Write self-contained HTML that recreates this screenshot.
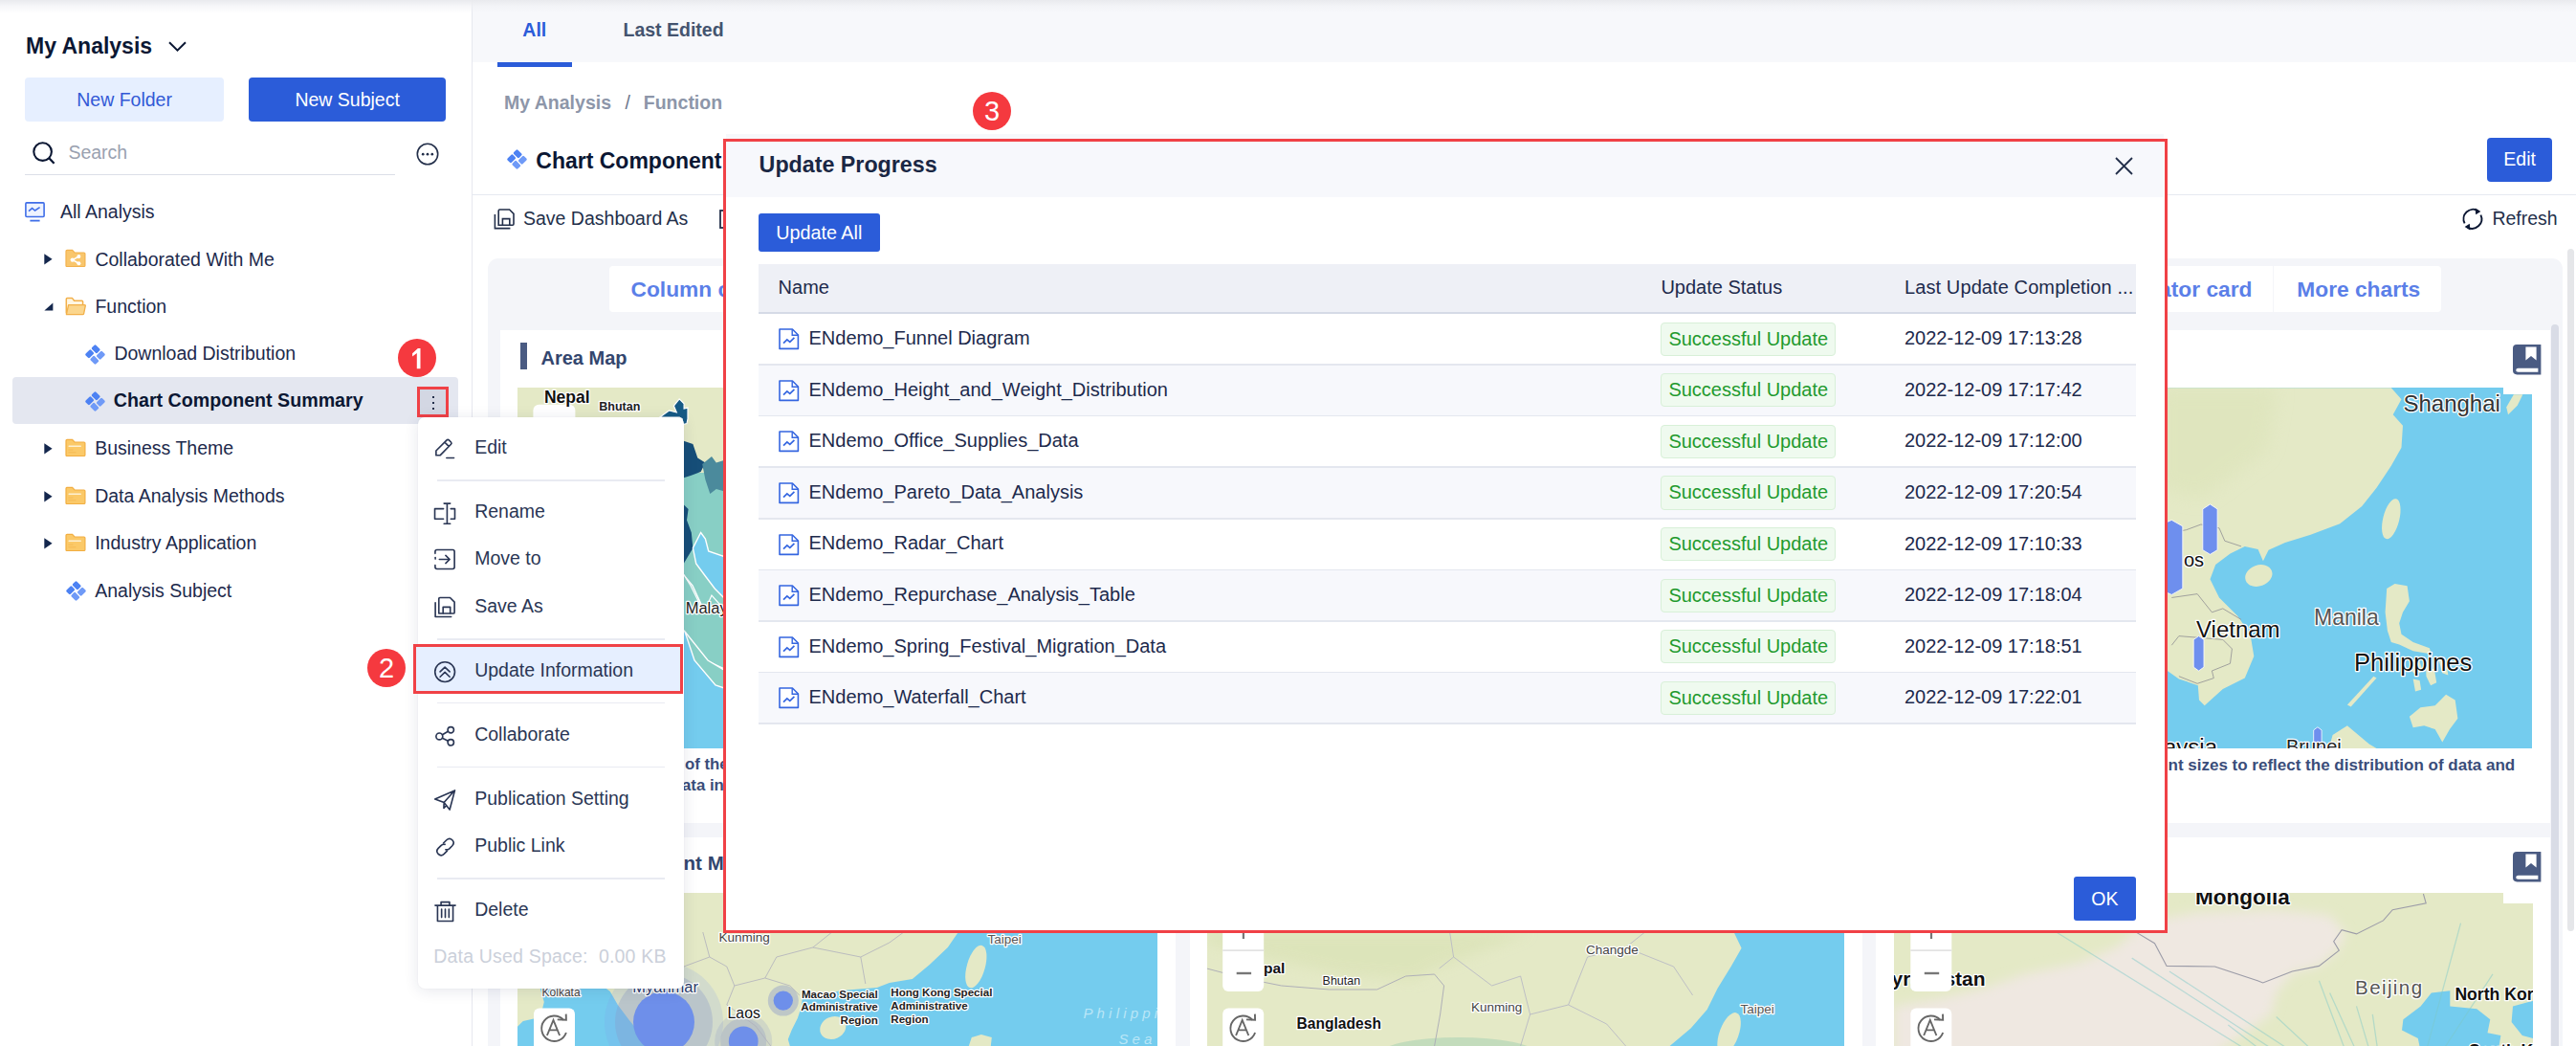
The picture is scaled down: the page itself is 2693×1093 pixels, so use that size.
<!DOCTYPE html>
<html><head><meta charset="utf-8"><title>Update Progress</title>
<style>
html,body{margin:0;padding:0;}
body{width:2693px;height:1093px;overflow:hidden;position:relative;background:#fff;font-family:"Liberation Sans",sans-serif;}
.b{position:absolute;display:block;}
.t{position:absolute;white-space:nowrap;}
svg{overflow:visible}
</style></head><body>

<div class="b" style="left:494.0px;top:0.0px;width:2199.0px;height:64.5px;background:#f7f8fb;"></div>
<div class="b" style="left:492.5px;top:0.0px;width:1.5px;height:1093.0px;background:#e6e8ef;"></div>
<div class="b" style="left:0.0px;top:0.0px;width:2693.0px;height:14.0px;background:linear-gradient(to bottom,#e9eaee 0%,rgba(240,241,245,0.6) 45%,rgba(255,255,255,0) 100%);"></div>
<div class="t" style="left:27.0px;top:36.80px;font-size:23px;line-height:23px;color:#0b1733;font-weight:700;">My Analysis</div>
<svg class="b" style="left:176.0px;top:43.0px;" width="19" height="11" viewBox="0 0 19 11"><path d="M1 1.2 L9.5 9.6 L18 1.2" fill="none" stroke="#0b1733" stroke-width="2"/></svg>
<div class="b" style="left:26.4px;top:81.0px;width:207.4px;height:46.0px;background:#e6efff;border-radius:4px;"></div>
<div class="t" style="left:26.4px;top:81px;width:207.4px;height:46px;line-height:46px;text-align:center;font-size:19.5px;color:#3259d6;">New Folder</div>
<div class="b" style="left:260.0px;top:81.0px;width:206.3px;height:46.0px;background:#2b5cd9;border-radius:4px;"></div>
<div class="t" style="left:260px;top:81px;width:206.3px;height:46px;line-height:46px;text-align:center;font-size:19.5px;color:#fff;">New Subject</div>
<svg class="b" style="left:34.0px;top:148.0px;" width="24" height="24" viewBox="0 0 24 24"><circle cx="10.6" cy="10.6" r="9.3" fill="none" stroke="#0b1733" stroke-width="2.1"/><path d="M17.3 17.3 L22.6 22.8" stroke="#0b1733" stroke-width="2.3" fill="none"/></svg>
<div class="t" style="left:71.4px;top:149.55px;font-size:19.5px;line-height:19.5px;color:#9aa1b0;">Search</div>
<svg class="b" style="left:434.5px;top:148.5px;" width="24" height="24" viewBox="0 0 24 24"><circle cx="12" cy="12" r="10.7" fill="none" stroke="#232f4a" stroke-width="1.6"/><circle cx="7.2" cy="12.2" r="1.35" fill="#232f4a"/><circle cx="12" cy="12.2" r="1.35" fill="#232f4a"/><circle cx="16.8" cy="12.2" r="1.35" fill="#232f4a"/></svg>
<div class="b" style="left:26.4px;top:181.7px;width:387.0px;height:1.6px;background:#dcdfe8;"></div>
<svg class="b" style="left:26.0px;top:211.0px;" width="21" height="21" viewBox="0 0 21 21"><rect x="0.9" y="0.9" width="19.2" height="14.6" rx="1" fill="#eef3ff" stroke="#3f6ee8" stroke-width="1.6"/><path d="M4 9.6 L7.6 6.6 L10.6 9 L15.6 5.6" fill="none" stroke="#3f6ee8" stroke-width="1.6"/><path d="M5.4 19.6 L15.6 19.6" stroke="#3f6ee8" stroke-width="1.8"/></svg>
<div class="t" style="left:63.0px;top:211.55px;font-size:19.5px;line-height:19.5px;color:#1d2a4c;">All Analysis</div>
<svg class="b" style="left:46.2px;top:265.0px;" width="9" height="12" viewBox="0 0 9 12"><path d="M0.3 0.3 L8.6 5.8 L0.3 11.4 Z" fill="#14274d"/></svg>
<svg class="b" style="left:68.4px;top:260.4px;" width="22" height="20" viewBox="0 0 22 20"><path d="M1 2.4 Q1 1.3 2.1 1.3 L7.6 1.3 L10 4 L19.8 4 Q20.9 4 20.9 5.1 L20.9 17.4 Q20.9 18.5 19.8 18.5 L2.1 18.5 Q1 18.5 1 17.4 Z" fill="#f9c66c" stroke="#f3b24d" stroke-width="1.2"/><path d="M8 11.6 L14 8.2 M8 11.6 L14 15" stroke="#fff" stroke-width="1.5" fill="none"/><circle cx="7.8" cy="11.6" r="2.2" fill="#fff"/><circle cx="14.4" cy="8" r="2" fill="#fff"/><circle cx="14.4" cy="15.2" r="2" fill="#fff"/></svg>
<div class="t" style="left:99.4px;top:261.55px;font-size:19.5px;line-height:19.5px;color:#1d2a4c;">Collaborated With Me</div>
<svg class="b" style="left:46.0px;top:315.6px;" width="10" height="9" viewBox="0 0 10 9"><path d="M9.4 0.4 L9.4 8.6 L0.4 8.6 Z" fill="#14274d"/></svg>
<svg class="b" style="left:68.4px;top:310.0px;" width="22" height="20" viewBox="0 0 22 20"><path d="M1.3 17.5 L1.3 2.4 Q1.3 1.4 2.3 1.4 L7.4 1.4 L9.6 4.2 L17.6 4.2 Q18.6 4.2 18.6 5.2 L18.6 8.4" fill="#fff6e2" stroke="#f2b04a" stroke-width="1.5" stroke-linejoin="round"/><path d="M3.6 8.6 L20.6 8.6 Q21.5 8.6 21.3 9.5 L19.6 17.8 Q19.4 18.7 18.5 18.7 L1.4 18.7 Z" fill="#fbd68d" stroke="#f2b04a" stroke-width="1.3" stroke-linejoin="round"/></svg>
<div class="t" style="left:99.4px;top:310.55px;font-size:19.5px;line-height:19.5px;color:#1d2a4c;">Function</div>
<svg class="b" style="left:88.6px;top:359.5px;" width="21" height="21" viewBox="0 0 21 21"><g transform="rotate(45 10.5 10.5) translate(2.88 2.88)"><rect x="0" y="0" width="8.0" height="6.0" rx="1.3" fill="#4d82f3"/><rect x="9.25" y="0" width="6.0" height="8.0" rx="1.3" fill="#6f9af7"/><rect x="7.25" y="9.25" width="8.0" height="6.0" rx="1.3" fill="#6f9af7"/><rect x="0" y="7.25" width="6.0" height="8.0" rx="1.3" fill="#4d82f3"/></g></svg>
<div class="t" style="left:119.4px;top:359.55px;font-size:19.5px;line-height:19.5px;color:#1d2a4c;">Download Distribution</div>
<div class="b" style="left:13.0px;top:394.0px;width:466.4px;height:48.6px;background:#e4e7f0;border-radius:4px;"></div>
<svg class="b" style="left:88.6px;top:409.0px;" width="21" height="21" viewBox="0 0 21 21"><g transform="rotate(45 10.5 10.5) translate(2.88 2.88)"><rect x="0" y="0" width="8.0" height="6.0" rx="1.3" fill="#4d82f3"/><rect x="9.25" y="0" width="6.0" height="8.0" rx="1.3" fill="#6f9af7"/><rect x="7.25" y="9.25" width="8.0" height="6.0" rx="1.3" fill="#6f9af7"/><rect x="0" y="7.25" width="6.0" height="8.0" rx="1.3" fill="#4d82f3"/></g></svg>
<div class="t" style="left:118.8px;top:409.48px;font-size:19.65px;line-height:19.65px;color:#0b1733;font-weight:700;">Chart Component Summary</div>
<div class="b" style="left:436.0px;top:404.4px;width:33.0px;height:32.0px;background:#d3d7e3;border:3px solid #f04146;box-sizing:border-box;"></div>
<div class="b" style="left:451.7px;top:413.6px;width:2.4px;height:2.4px;background:#232f4a;"></div>
<div class="b" style="left:451.7px;top:419.6px;width:2.4px;height:2.4px;background:#232f4a;"></div>
<div class="b" style="left:451.7px;top:425.6px;width:2.4px;height:2.4px;background:#232f4a;"></div>
<svg class="b" style="left:46.2px;top:463.3px;" width="9" height="12" viewBox="0 0 9 12"><path d="M0.3 0.3 L8.6 5.8 L0.3 11.4 Z" fill="#14274d"/></svg>
<svg class="b" style="left:68.4px;top:458.3px;" width="22" height="20" viewBox="0 0 22 20"><path d="M1 2.4 Q1 1.3 2.1 1.3 L7.6 1.3 L10 4 L19.8 4 Q20.9 4 20.9 5.1 L20.9 17.4 Q20.9 18.5 19.8 18.5 L2.1 18.5 Q1 18.5 1 17.4 Z" fill="#fbc968" stroke="#f2ae42" stroke-width="1.2"/><rect x="3.4" y="7.4" width="13.6" height="1.6" rx="0.8" fill="#fdf0d2"/><rect x="3.4" y="11.6" width="5" height="1" fill="#f5bb55"/><rect x="3.4" y="14.2" width="8" height="1" fill="#f5bb55"/></svg>
<div class="t" style="left:99.2px;top:458.55px;font-size:19.5px;line-height:19.5px;color:#1d2a4c;">Business Theme</div>
<svg class="b" style="left:46.2px;top:512.8px;" width="9" height="12" viewBox="0 0 9 12"><path d="M0.3 0.3 L8.6 5.8 L0.3 11.4 Z" fill="#14274d"/></svg>
<svg class="b" style="left:68.4px;top:507.8px;" width="22" height="20" viewBox="0 0 22 20"><path d="M1 2.4 Q1 1.3 2.1 1.3 L7.6 1.3 L10 4 L19.8 4 Q20.9 4 20.9 5.1 L20.9 17.4 Q20.9 18.5 19.8 18.5 L2.1 18.5 Q1 18.5 1 17.4 Z" fill="#fbc968" stroke="#f2ae42" stroke-width="1.2"/><rect x="3.4" y="7.4" width="13.6" height="1.6" rx="0.8" fill="#fdf0d2"/><rect x="3.4" y="11.6" width="5" height="1" fill="#f5bb55"/><rect x="3.4" y="14.2" width="8" height="1" fill="#f5bb55"/></svg>
<div class="t" style="left:99.2px;top:508.55px;font-size:19.5px;line-height:19.5px;color:#1d2a4c;">Data Analysis Methods</div>
<svg class="b" style="left:46.2px;top:562.3px;" width="9" height="12" viewBox="0 0 9 12"><path d="M0.3 0.3 L8.6 5.8 L0.3 11.4 Z" fill="#14274d"/></svg>
<svg class="b" style="left:68.4px;top:557.3px;" width="22" height="20" viewBox="0 0 22 20"><path d="M1 2.4 Q1 1.3 2.1 1.3 L7.6 1.3 L10 4 L19.8 4 Q20.9 4 20.9 5.1 L20.9 17.4 Q20.9 18.5 19.8 18.5 L2.1 18.5 Q1 18.5 1 17.4 Z" fill="#fbc968" stroke="#f2ae42" stroke-width="1.2"/><rect x="3.4" y="7.4" width="13.6" height="1.6" rx="0.8" fill="#fdf0d2"/><rect x="3.4" y="11.6" width="5" height="1" fill="#f5bb55"/><rect x="3.4" y="14.2" width="8" height="1" fill="#f5bb55"/></svg>
<div class="t" style="left:99.2px;top:557.55px;font-size:19.5px;line-height:19.5px;color:#1d2a4c;">Industry Application</div>
<svg class="b" style="left:68.6px;top:606.8px;" width="21" height="21" viewBox="0 0 21 21"><g transform="rotate(45 10.5 10.5) translate(2.88 2.88)"><rect x="0" y="0" width="8.0" height="6.0" rx="1.3" fill="#4d82f3"/><rect x="9.25" y="0" width="6.0" height="8.0" rx="1.3" fill="#6f9af7"/><rect x="7.25" y="9.25" width="8.0" height="6.0" rx="1.3" fill="#6f9af7"/><rect x="0" y="7.25" width="6.0" height="8.0" rx="1.3" fill="#4d82f3"/></g></svg>
<div class="t" style="left:99.2px;top:607.55px;font-size:19.5px;line-height:19.5px;color:#1d2a4c;">Analysis Subject</div>
<div class="t" style="left:546.3px;top:21.55px;font-size:19.5px;line-height:19.5px;color:#2b5cd9;font-weight:700;">All</div>
<div class="b" style="left:520.0px;top:64.5px;width:78.0px;height:5.4px;background:#2b5cd9;"></div>
<div class="t" style="left:651.5px;top:21.55px;font-size:19.5px;line-height:19.5px;color:#44546f;font-weight:700;">Last Edited</div>
<div class="t" style="left:527.0px;top:97.55px;font-size:19.5px;line-height:19.5px;color:#8d96a9;font-weight:700;">My Analysis</div>
<div class="t" style="left:653.5px;top:97.55px;font-size:19.5px;line-height:19.5px;color:#6a748a;">/</div>
<div class="t" style="left:672.8px;top:97.55px;font-size:19.5px;line-height:19.5px;color:#8d96a9;font-weight:700;">Function</div>
<svg class="b" style="left:529.5px;top:156.0px;" width="21" height="21" viewBox="0 0 21 21"><g transform="rotate(45 10.5 10.5) translate(2.88 2.88)"><rect x="0" y="0" width="8.0" height="6.0" rx="1.3" fill="#4d82f3"/><rect x="9.25" y="0" width="6.0" height="8.0" rx="1.3" fill="#6f9af7"/><rect x="7.25" y="9.25" width="8.0" height="6.0" rx="1.3" fill="#6f9af7"/><rect x="0" y="7.25" width="6.0" height="8.0" rx="1.3" fill="#4d82f3"/></g></svg>
<div class="t" style="left:560.3px;top:156.80px;font-size:23px;line-height:23px;color:#0b1733;font-weight:700;">Chart Component Summary</div>
<div class="b" style="left:2599.7px;top:144.0px;width:68.8px;height:45.6px;background:#2b5cd9;border-radius:4px;"></div>
<div class="t" style="left:2599.7px;top:144px;width:68.8px;height:45.6px;line-height:45.6px;text-align:center;font-size:19.5px;color:#fff;">Edit</div>
<div class="b" style="left:494.0px;top:202.5px;width:2199.0px;height:1.5px;background:#e6e9f0;"></div>
<svg class="b" style="left:516.0px;top:218.0px;" width="22" height="22" viewBox="0 0 22 22"><path d="M5.2 4.4 L5.2 2.2 Q5.2 1 6.4 1 L16.6 1 L21 5.4 L21 16 Q21 17.2 19.8 17.2 L5.2 17.2 Z" fill="none" stroke="#232f4a" stroke-width="1.6"/><path d="M9.4 17 L9.4 10.6 L16.8 10.6 L16.8 17" fill="none" stroke="#232f4a" stroke-width="1.6"/><path d="M1.4 6 L1.4 20.6 L17.4 20.6" fill="none" stroke="#232f4a" stroke-width="1.6"/></svg>
<div class="t" style="left:547.0px;top:218.55px;font-size:19.5px;line-height:19.5px;color:#232f4a;">Save Dashboard As</div>
<svg class="b" style="left:751.5px;top:219.0px;" width="8" height="20" viewBox="0 0 8 20"><rect x="1" y="1" width="12" height="18" fill="none" stroke="#232f4a" stroke-width="1.8"/></svg>
<svg class="b" style="left:2572.5px;top:216.5px;" width="24" height="24" viewBox="0 0 24 24"><path d="M3.6 16.4 A10 10 0 0 1 17.6 3.2" fill="none" stroke="#0b1733" stroke-width="1.9"/><path d="M20.4 7.6 A10 10 0 0 1 6.6 20.6" fill="none" stroke="#0b1733" stroke-width="1.9"/><path d="M14.6 0.6 L20.4 4 L15.2 7.2 Z" fill="#0b1733"/><path d="M9.4 23.4 L3.6 20 L8.8 16.8 Z" fill="#0b1733"/></svg>
<div class="t" style="left:2605.4px;top:218.55px;font-size:19.5px;line-height:19.5px;color:#232f4a;">Refresh</div>
<div class="b" style="left:510.0px;top:270.0px;width:2168.8px;height:830.0px;background:#f4f5f9;border-radius:11px 11px 0 0;"></div>
<div class="b" style="left:636.6px;top:278.0px;width:400.0px;height:48.0px;background:#fff;border-radius:4px;"></div>
<div class="t" style="left:659.5px;top:290.93px;font-size:22.75px;line-height:22.75px;color:#5b7fe8;font-weight:700;">Column chart</div>
<div class="b" style="left:2100.0px;top:277.8px;width:276.0px;height:47.8px;background:#fff;"></div>
<div class="b" style="left:2377.0px;top:277.8px;width:175.3px;height:47.8px;background:#fff;border-radius:0 4px 4px 0;"></div>
<div class="t" style="left:2204.0px;top:290.93px;font-size:22.75px;line-height:22.75px;color:#5b7fe8;font-weight:700;">Indicator card</div>
<div class="t" style="left:2401.3px;top:290.93px;font-size:22.75px;line-height:22.75px;color:#5b7fe8;font-weight:700;">More charts</div>
<div class="b" style="left:523.4px;top:345.0px;width:706.1px;height:515.4px;background:#fff;"></div>
<div class="b" style="left:523.4px;top:874.5px;width:706.1px;height:230.0px;background:#fff;"></div>
<div class="b" style="left:1243.5px;top:345.0px;width:703.4px;height:515.4px;background:#fff;"></div>
<div class="b" style="left:1243.5px;top:874.5px;width:703.4px;height:230.0px;background:#fff;"></div>
<div class="b" style="left:1960.9px;top:345.0px;width:705.1px;height:515.4px;background:#fff;"></div>
<div class="b" style="left:1960.9px;top:874.5px;width:705.1px;height:230.0px;background:#fff;"></div>
<div class="b" style="left:544.3px;top:358.2px;width:6.7px;height:28.2px;background:#4a5b82;"></div>
<div class="t" style="left:565.5px;top:364.30px;font-size:20px;line-height:20px;color:#33466e;font-weight:700;">Area Map</div>
<div class="t" style="left:565.5px;top:892.30px;font-size:20px;line-height:20px;color:#33466e;font-weight:700;">Point Map</div>
<div class="t" style="left:714.6px;top:891.55px;font-size:20.5px;line-height:20.5px;color:#33466e;font-weight:700;">nt Map</div>
<div class="t" style="left:716.0px;top:791.40px;font-size:16.8px;line-height:16.8px;color:#3a4d7a;font-weight:700;">of the</div>
<div class="t" style="left:713.0px;top:813.40px;font-size:16.8px;line-height:16.8px;color:#3a4d7a;font-weight:700;">ata in</div>
<div class="t" style="left:2266.5px;top:791.30px;font-size:17px;line-height:17px;color:#3a4d7a;font-weight:700;">nt sizes to reflect the distribution of data and</div>
<svg class="b" style="left:2626.8px;top:360.0px;" width="30" height="32" viewBox="0 0 30 32"><path d="M0 4 Q0 0 4 0 L29.4 0 L29.4 31.4 L4.4 31.4 Q0 31.4 0 27 Z" fill="#4a5b82"/><path d="M3.2 27 Q3.2 24.8 5.6 24.8 L26.4 24.8 L26.4 28.8 L5.6 28.8 Q3.2 28.8 3.2 27 Z" fill="#fff"/><path d="M13.4 2.6 L24.6 2.6 L24.6 16.4 L19 12 L13.4 16.4 Z" fill="#fff"/></svg>
<svg class="b" style="left:2626.8px;top:890.0px;" width="30" height="32" viewBox="0 0 30 32"><path d="M0 4 Q0 0 4 0 L29.4 0 L29.4 31.4 L4.4 31.4 Q0 31.4 0 27 Z" fill="#4a5b82"/><path d="M3.2 27 Q3.2 24.8 5.6 24.8 L26.4 24.8 L26.4 28.8 L5.6 28.8 Q3.2 28.8 3.2 27 Z" fill="#fff"/><path d="M13.4 2.6 L24.6 2.6 L24.6 16.4 L19 12 L13.4 16.4 Z" fill="#fff"/></svg>
<svg class="b" style="left:541.0px;top:405.0px;overflow:hidden;background:#74ccee" width="669.6" height="376.5" viewBox="541.0 405.0 669.6 376.5"><rect x="541" y="405" width="680" height="95" fill="#e4e9c6"/><path d="M689.8 436 L699.5 429 L707.3 430.9 L704.4 424.1 L710.2 416.8 L715.1 421.7 L715.1 427 L719 426.1 L719 437.7 L718 442.6 L714.1 443.5 L713.1 437.7 L710.2 436 Z" fill="#165a85" stroke="#fff" stroke-width="1.2"/><path d="M700 494 L760 494 L760 700 L738 690 L716 660 L700 640 Z" fill="#88cfc5"/><path d="M714 460.6 L724.4 463.9 L729.3 478.5 L737.4 483.4 L732.6 493.1 L722 497 L714 499.6 L700 500 L700 456 Z" fill="#164e78"/><path d="M734.2 485 L744 476.9 L748.8 483.4 L760 480 L760 514.2 L748.8 511 L742.3 515.9 L737.4 501.2 Z" fill="#4b8a9c"/><path d="M700 524 L714.7 527.2 L719.6 532.1 L718 543.5 L722.8 556.5 L724.4 572.7 L714.7 589 L700 590 Z" fill="#164e78"/><path d="M732.6 556.5 L737.4 563 L740.7 576 L760 582.5 L760 628 L747.2 615 L737.4 602 L727.7 589 L724.4 572.7 Z" fill="#74ccee" stroke="#fff" stroke-width="1.4"/><path d="M714 600 L724 612 L737 640 L760 662" fill="none" stroke="#fff" stroke-width="1.4"/><path d="M700 640 L716 660 L738 690 L760 700 L760 640 L744 622 L736 640 L722 612 L712 596 L700 600 Z" fill="#88cfc5" stroke="#fff" stroke-width="1.2"/><path d="M716 660 L726 690 L748 716 L760 720 L760 702 L740 690 Z" fill="#88cfc5" stroke="#fff" stroke-width="1.4"/><rect x="557.4" y="422.7" width="44" height="60" rx="6" fill="#fff"/><text x="569" y="421" font-family="Liberation Sans, sans-serif" font-size="17.5" fill="#111" style="font-weight:700;paint-order:stroke;stroke:#fff;stroke-width:2.6px;stroke-linejoin:round;">Nepal</text><text x="626.3" y="429.2" font-family="Liberation Sans, sans-serif" font-size="12.5" fill="#222" style="font-weight:700;paint-order:stroke;stroke:#fff;stroke-width:2.6px;stroke-linejoin:round;">Bhutan</text><text x="716.7" y="641" font-family="Liberation Sans, sans-serif" font-size="16.5" fill="#222" style="paint-order:stroke;stroke:#fff;stroke-width:2.6px;stroke-linejoin:round;">Malaysia</text></svg>
<svg class="b" style="left:2262.0px;top:405.0px;overflow:hidden;background:#74ccee" width="384.7" height="376.5" viewBox="2262.0 405.0 384.7 376.5"><defs><filter id="bl8" x="-30%" y="-30%" width="160%" height="160%"><feGaussianBlur stdDeviation="9"/></filter></defs><polygon points="2255.0,405.3 2499.8,405.3 2510.5,417.2 2501.7,433.2 2512.0,444.7 2510.5,467.7 2499.8,486.8 2484.5,509.7 2469.2,528.9 2446.2,547.2 2415.6,558.7 2388.9,567.1 2371.6,574.7 2365.9,586.2 2360.6,574.0 2346.8,570.9 2331.5,578.6 2316.2,590.0 2310.5,605.3 2320.0,624.5 2339.1,643.6 2352.5,662.7 2356.3,685.7 2346.8,708.6 2323.8,720.1 2304.7,737.3 2299.0,731.5 2297.8,716.2 2277.9,709.4 2255.0,693.3" fill="#e4e9c6"/><polygon points="2255.0,405.3 2381.2,405.3 2369.7,471.5 2300.9,521.2 2255.0,509.7" fill="#dbe3b8" opacity="0.55" filter="url(#bl8)"/><ellipse cx="2361.3" cy="601.5" rx="14.5" ry="11" fill="#e4e9c6" transform="rotate(-20 2361.3 601.5)"/><ellipse cx="2499.8" cy="542.2" rx="8.5" ry="21.5" fill="#e4e9c6" transform="rotate(14 2499.8 542.2)"/><polygon points="2495.2,614.9 2503.6,609.9 2516.6,612.2 2518.9,628.3 2512.0,639.8 2508.2,651.2 2510.5,662.7 2522.7,671.1 2539.9,677.2 2541.8,683.4 2522.7,680.3 2508.2,673.4 2499.8,671.1 2495.9,658.9 2493.6,639.8" fill="#e4e9c6"/><polygon points="2518.9,690.2 2528.8,688.7 2532.7,701.0 2525.8,705.5 2519.6,699.4" fill="#e4e9c6"/><polygon points="2518.9,748.8 2530.4,739.2 2545.7,737.3 2557.1,725.8 2566.7,731.5 2569.4,750.7 2561.0,762.1 2553.3,775.5 2545.7,762.1 2534.2,758.3 2522.7,760.2" fill="#e4e9c6"/><polygon points="2453.9,736.5 2481.4,706.7 2484.5,708.6 2457.7,738.4" fill="#e4e9c6"/><polygon points="2434.7,782.0 2438.6,767.9 2453.9,758.3 2476.8,777.4 2484.5,782.0" fill="#e4e9c6"/><polygon points="2536.1,697.1 2544.9,699.4 2547.2,713.2 2541.1,716.2 2536.5,706.7" fill="#e4e9c6"/><polygon points="2522.7,709.4 2529.6,710.9 2531.1,720.8 2525.0,722.4" fill="#e4e9c6"/><polygon points="2549.5,689.5 2557.1,691.8 2559.4,705.5 2553.3,703.2" fill="#e4e9c6"/><polygon points="2627.9,412.2 2637.4,412.2 2631.7,423.7 2622.1,433.2 2620.2,425.6" fill="#e4e9c6"/><polyline points="2255.0,559.4 2285.6,553.7 2300.9,548.0 2320.0,551.8 2325.8,565.2 2343.0,570.9" fill="none" stroke="#999" stroke-width="0.9"/><polyline points="2270.3,624.5 2297.1,620.6 2312.4,639.8 2323.8,635.9 2343.0,647.4" fill="none" stroke="#999" stroke-width="0.9"/><polyline points="2270.3,674.2 2277.9,664.6 2323.8,668.4 2333.4,678.0 2331.5,693.3 2312.4,701.0 2314.3,708.6 2297.1,714.3 2277.9,706.7" fill="none" stroke="#999" stroke-width="0.9"/><polygon points="2255.0,549.9 2270.3,543.4 2281.8,549.9 2281.8,614.9 2270.3,621.4 2255.0,614.9" fill="#6e8fee" stroke="#fff" stroke-width="0.8"/><polygon points="2302.8,531.9 2310.5,526.9 2318.1,531.9 2318.1,574.7 2310.5,579.3 2302.8,574.7" fill="#6e8fee" stroke="#fff" stroke-width="0.8"/><polygon points="2293.2,668.4 2298.6,664.6 2304.0,668.4 2304.0,697.1 2298.6,701.0 2293.2,697.1" fill="#6e8fee" stroke="#fff" stroke-width="0.8"/><polygon points="2418.7,762.9 2422.9,759.8 2427.1,762.9 2427.1,782.0 2418.7,782.0" fill="#6e8fee" stroke="#fff" stroke-width="0.8"/><text x="2512.5" y="429.5" font-family="Liberation Sans, sans-serif" font-size="24" fill="#333" style="paint-order:stroke;stroke:#fff;stroke-width:2.6px;stroke-linejoin:round;">Shanghai</text><text x="2283" y="592.5" font-family="Liberation Sans, sans-serif" font-size="20" fill="#111" style="paint-order:stroke;stroke:#fff;stroke-width:2.6px;stroke-linejoin:round;">os</text><text x="2296" y="666.5" font-family="Liberation Sans, sans-serif" font-size="24" fill="#111" style="paint-order:stroke;stroke:#fff;stroke-width:2.6px;stroke-linejoin:round;">Vietnam</text><text x="2419" y="653.5" font-family="Liberation Sans, sans-serif" font-size="23" fill="#555" style="paint-order:stroke;stroke:#fff;stroke-width:2.6px;stroke-linejoin:round;">Manila</text><text x="2461" y="701.5" font-family="Liberation Sans, sans-serif" font-size="25.5" fill="#111" style="paint-order:stroke;stroke:#fff;stroke-width:2.6px;stroke-linejoin:round;">Philippines</text><text x="2262" y="789" font-family="Liberation Sans, sans-serif" font-size="24" fill="#111" style="paint-order:stroke;stroke:#fff;stroke-width:2.6px;stroke-linejoin:round;">aysia</text><text x="2390" y="787" font-family="Liberation Sans, sans-serif" font-size="20" fill="#222" style="paint-order:stroke;stroke:#fff;stroke-width:2.6px;stroke-linejoin:round;">Brunei</text></svg>
<div class="b" style="left:2617.0px;top:404.0px;width:31.0px;height:8.4px;background:#fff;"></div>
<svg class="b" style="left:541.2px;top:933.0px;overflow:hidden;background:#74ccee" width="669.3" height="170.0" viewBox="541.2 933.0 669.3 170.0"><polygon points="634,933 1030,933 1002,974 991,990 972,1008 954,1023 930,1027 917,1032 880,1035 839,1043 838,1052 834,1064 828,1076 824,1086 826,1093 835,1100 680,1100 676,1093 668,1078 658,1066 646,1050 638,1036 634,1033" fill="#e4e9c6"/><rect x="541" y="933" width="93" height="100" fill="#e4e9c6"/><polygon points="541,1033 565,1033 569,1047 565,1063 547,1067 541,1073" fill="#e4e9c6"/><ellipse cx="871" cy="1074" rx="14" ry="11.5" fill="#e4e9c6" transform="rotate(-25 871 1074)"/><ellipse cx="1020.5" cy="1010" rx="9.5" ry="23" fill="#e4e9c6" transform="rotate(16 1020.5 1010)"/><polygon points="1013,1093 1016,1084 1026,1081 1037,1084 1036,1093" fill="#e4e9c6"/><circle cx="694.2" cy="1068" r="62" fill="#7f9bea" opacity="0.18"/><circle cx="694.2" cy="1068" r="51" fill="#8a98c8" opacity="0.32"/><circle cx="694.2" cy="1068" r="32" fill="#6e8fea"/><circle cx="777.4" cy="1088" r="30" fill="#8a98c8" opacity="0.22"/><circle cx="777.4" cy="1088" r="24" fill="#8a98c8" opacity="0.3"/><circle cx="777.4" cy="1088" r="15.4" fill="#6e8fea"/><circle cx="819" cy="1045.6" r="16" fill="#8a98c8" opacity="0.42"/><circle cx="819" cy="1045.6" r="10.2" fill="#6e8fea"/><path d="M735 974 L742 1000 L760 1010 L768 1030 L800 1022 L826 1030 L836 1040 M768 1030 L760 1050 L790 1072 L806 1093 M742 1000 L715 1010 L705 1033 M800 1022 L812 1000 L850 990 L870 974 M850 990 L900 1000 L930 985 L945 974 M900 1000 L905 1028" fill="none" stroke="#b0b0bc" stroke-width="0.8"/><rect x="558.2" y="1053.6" width="43" height="60" rx="6" fill="#fff"/><path d="M589.3 1065.8 A13.2 13.2 0 1 0 592.1 1079" fill="none" stroke="#666" stroke-width="1.9"/><path d="M582.9 1065.4 L592.1 1065.8 L591.9 1059.6" fill="none" stroke="#666" stroke-width="1.9"/><path d="M572.1 1082 L578.7 1066 L585.3 1082 M574.7 1076.4 L582.7 1076.4" fill="none" stroke="#666" stroke-width="1.9"/><text x="751.7" y="984" font-family="Liberation Sans, sans-serif" font-size="13.5" fill="#444" style="paint-order:stroke;stroke:#fff;stroke-width:2.6px;stroke-linejoin:round;">Kunming</text><text x="1032.6" y="986" font-family="Liberation Sans, sans-serif" font-size="13.5" fill="#555" style="paint-order:stroke;stroke:#fff;stroke-width:2.6px;stroke-linejoin:round;">Taipei</text><text x="760.8" y="1063.6" font-family="Liberation Sans, sans-serif" font-size="15.8" fill="#111" style="paint-order:stroke;stroke:#fff;stroke-width:2.6px;stroke-linejoin:round;">Laos</text><text x="566.8" y="1041.5" font-family="Liberation Sans, sans-serif" font-size="12" fill="#444" style="paint-order:stroke;stroke:#fff;stroke-width:2.6px;stroke-linejoin:round;">Kolkata</text><text x="661.5" y="1037" font-family="Liberation Sans, sans-serif" font-size="16.5" fill="#2a3a6a" style="paint-order:stroke;stroke:#fff;stroke-width:2.6px;stroke-linejoin:round;">Myanmar</text><g text-anchor="end"><text x="918" y="1042.6" font-family="Liberation Sans, sans-serif" font-size="11.6" fill="#222" style="font-weight:700;paint-order:stroke;stroke:#fff;stroke-width:2.6px;stroke-linejoin:round;">Macao Special</text><text x="918" y="1056" font-family="Liberation Sans, sans-serif" font-size="11.6" fill="#222" style="font-weight:700;paint-order:stroke;stroke:#fff;stroke-width:2.6px;stroke-linejoin:round;">Administrative</text><text x="918" y="1069.8" font-family="Liberation Sans, sans-serif" font-size="11.6" fill="#222" style="font-weight:700;paint-order:stroke;stroke:#fff;stroke-width:2.6px;stroke-linejoin:round;">Region</text></g><text x="931.5" y="1041.5" font-family="Liberation Sans, sans-serif" font-size="11.6" fill="#222" style="font-weight:700;paint-order:stroke;stroke:#fff;stroke-width:2.6px;stroke-linejoin:round;">Hong Kong Special</text><text x="931.5" y="1055" font-family="Liberation Sans, sans-serif" font-size="11.6" fill="#222" style="font-weight:700;paint-order:stroke;stroke:#fff;stroke-width:2.6px;stroke-linejoin:round;">Administrative</text><text x="931.5" y="1068.7" font-family="Liberation Sans, sans-serif" font-size="11.6" fill="#222" style="font-weight:700;paint-order:stroke;stroke:#fff;stroke-width:2.6px;stroke-linejoin:round;">Region</text><text x="1132.6" y="1064" font-family="Liberation Sans, sans-serif" font-size="15" font-style="italic" fill="#b9e6f7" letter-spacing="4.2">Philippine</text><text x="1169.6" y="1091.5" font-family="Liberation Sans, sans-serif" font-size="15" font-style="italic" fill="#b9e6f7" letter-spacing="4.2">Sea</text></svg>
<svg class="b" style="left:1262.4px;top:933.0px;overflow:hidden;background:#74ccee" width="665.6" height="170.0" viewBox="1262.4 933.0 665.6 170.0"><defs><filter id="bl7" x="-30%" y="-30%" width="160%" height="160%"><feGaussianBlur stdDeviation="7"/></filter></defs><polygon points="1813,974 1821,990.7 1810,1010 1796,1032.7 1785,1055 1768,1074.6 1746,1093 1740,1100 1262,1100 1262,933 1813,933" fill="#e4e9c6"/><polygon points="1262,985 1320,1000 1400,1018 1480,1024 1500,1012 1560,990 1600,974 1262,974" fill="#dbe3b8" opacity="0.8" filter="url(#bl7)"/><ellipse cx="1808" cy="1080" rx="10" ry="23" fill="#e4e9c6" transform="rotate(20 1808 1080)"/><ellipse cx="1525" cy="1100" rx="80" ry="16" fill="#9ccbb0" opacity="0.45"/><path d="M1262 1012 L1300 1022 L1340 1030 L1390 1034 L1440 1034 L1470 1020 L1500 1018 L1510 1030 L1506 1060 L1500 1093" fill="none" stroke="#a9a9b6" stroke-width="0.9"/><path d="M1505 1012 L1520 1000 L1516 974 M1520 1000 L1560 1030 L1590 1020 L1600 1060 L1640 1050 L1680 1070 L1700 1093 M1600 1060 L1590 1093 M1640 1050 L1660 1000 L1700 990 L1720 974 M1700 990 L1750 1010 L1770 1040" fill="none" stroke="#b4b4c4" stroke-width="0.8"/><rect x="1278.6" y="951" width="43" height="85" rx="6" fill="#fff"/><rect x="1278.6" y="992.4" width="43" height="1.4" fill="#ddd"/><rect x="1293.1" y="1015.8" width="15.4" height="2.4" fill="#777"/><rect x="1299.1999999999998" y="966" width="2.2" height="15" fill="#777"/><rect x="1278.6" y="1053.6" width="43" height="60" rx="6" fill="#fff"/><path d="M1309.6999999999998 1065.8 A13.2 13.2 0 1 0 1312.4999999999998 1079" fill="none" stroke="#666" stroke-width="1.9"/><path d="M1303.3 1065.4 L1312.4999999999998 1065.8 L1312.3 1059.6" fill="none" stroke="#666" stroke-width="1.9"/><path d="M1292.4999999999998 1082 L1299.1 1066 L1305.6999999999998 1082 M1295.1 1076.4 L1303.1 1076.4" fill="none" stroke="#666" stroke-width="1.9"/><text x="1383" y="1029.3" font-family="Liberation Sans, sans-serif" font-size="12.5" fill="#222" style="paint-order:stroke;stroke:#fff;stroke-width:2.6px;stroke-linejoin:round;">Bhutan</text><text x="1356" y="1074.6" font-family="Liberation Sans, sans-serif" font-size="15.6" fill="#111" style="font-weight:700;paint-order:stroke;stroke:#fff;stroke-width:2.6px;stroke-linejoin:round;">Bangladesh</text><text x="1538.5" y="1057.3" font-family="Liberation Sans, sans-serif" font-size="13.5" fill="#444" style="paint-order:stroke;stroke:#fff;stroke-width:2.6px;stroke-linejoin:round;">Kunming</text><text x="1658.4" y="997.2" font-family="Liberation Sans, sans-serif" font-size="13.5" fill="#444" style="paint-order:stroke;stroke:#fff;stroke-width:2.6px;stroke-linejoin:round;">Changde</text><text x="1820" y="1059.2" font-family="Liberation Sans, sans-serif" font-size="13.5" fill="#555" style="paint-order:stroke;stroke:#fff;stroke-width:2.6px;stroke-linejoin:round;">Taipei</text><text x="1321.4" y="1016.7" font-family="Liberation Sans, sans-serif" font-size="15.5" fill="#111" style="font-weight:700;paint-order:stroke;stroke:#fff;stroke-width:2.6px;stroke-linejoin:round;">pal</text></svg>
<svg class="b" style="left:1979.6px;top:933.0px;overflow:hidden;background:#e4e9c6" width="668.0" height="170.0" viewBox="1979.6 933.0 668.0 170.0"><defs><filter id="bl6" x="-20%" y="-20%" width="140%" height="140%"><feGaussianBlur stdDeviation="6"/></filter></defs><polygon points="1979.6,1104.5 1979.6,1051.4 2029.9,1043.0 2077.4,1031.8 2116.5,1017.8 2172.4,1006.6 2211.6,989.9 2228.3,975.9 2250.7,961.9 2295.4,953.5 2379.3,950.7 2435.2,956.3 2451.9,975.9 2443.5,992.7 2424.0,1009.4 2396.0,1016.4 2379.3,1037.4 2373.7,1059.8 2351.3,1076.5 2309.4,1104.5" fill="#efe8e1" filter="url(#bl6)"/><polygon points="2512.0,1065.3 2530.2,1051.4 2541.4,1037.4 2560.9,1035.2 2560.9,1051.4 2588.9,1054.2 2602.9,1065.3 2600.1,1079.3 2614.0,1082.1 2611.2,1098.9 2530.2,1098.9 2527.4,1084.9 2510.6,1076.5" fill="#74ccee"/><polygon points="2626.6,1051.4 2647.6,1045.8 2647.6,1084.9 2636.4,1082.1 2625.2,1068.1" fill="#74ccee"/><polyline points="2231.1,973.1 2252.1,985.7 2264.7,1009.4 2315.0,1010.0 2359.7,1024.8 2365.3,1027.0 2396.0,1015.0 2424.0,1009.4 2444.9,993.2 2439.3,983.7 2447.7,971.7 2463.1,975.9 2491.1,961.9 2500.8,950.7 2535.8,943.8 2533.0,934.0" fill="none" stroke="#9c9ca8" stroke-width="1.1"/><line x1="2150.1" y1="974.5" x2="2351.3" y2="1098.9" stroke="#7cc8c8" stroke-width="1.3" opacity="0.45"/><line x1="2228.3" y1="1001.1" x2="2379.3" y2="1098.9" stroke="#7cc8c8" stroke-width="1.3" opacity="0.45"/><line x1="2267.5" y1="1015.0" x2="2396.0" y2="1098.9" stroke="#7cc8c8" stroke-width="1.3" opacity="0.45"/><line x1="2424.0" y1="1024.8" x2="2451.9" y2="1098.9" stroke="#7cc8c8" stroke-width="1.3" opacity="0.45"/><line x1="2435.2" y1="1037.4" x2="2463.1" y2="1098.9" stroke="#7cc8c8" stroke-width="1.3" opacity="0.45"/><line x1="2379.3" y1="1062.5" x2="2418.4" y2="1098.9" stroke="#7cc8c8" stroke-width="1.3" opacity="0.45"/><line x1="2572.1" y1="964.7" x2="2535.8" y2="1098.9" stroke="#7cc8c8" stroke-width="1.3" opacity="0.45"/><line x1="2605.6" y1="1017.8" x2="2552.5" y2="1098.9" stroke="#7cc8c8" stroke-width="1.3" opacity="0.45"/><line x1="2463.1" y1="1051.4" x2="2477.1" y2="1098.9" stroke="#7cc8c8" stroke-width="1.3" opacity="0.45"/><line x1="2479.9" y1="1059.8" x2="2485.5" y2="1098.9" stroke="#7cc8c8" stroke-width="1.3" opacity="0.45"/><line x1="2328.9" y1="1070.9" x2="2365.3" y2="1098.9" stroke="#7cc8c8" stroke-width="1.3" opacity="0.45"/><text x="1962" y="1030.4" font-family="Liberation Sans, sans-serif" font-size="21" fill="#111" style="font-weight:700;paint-order:stroke;stroke:#fff;stroke-width:2.6px;stroke-linejoin:round;">Kyrgyzstan</text><rect x="1996.9" y="951" width="43" height="85" rx="6" fill="#fff"/><rect x="1996.9" y="992.4" width="43" height="1.4" fill="#ddd"/><rect x="2011.4" y="1015.8" width="15.4" height="2.4" fill="#777"/><rect x="2017.5" y="966" width="2.2" height="15" fill="#777"/><rect x="1996.9" y="1053.6" width="43" height="60" rx="6" fill="#fff"/><path d="M2028.0 1065.8 A13.2 13.2 0 1 0 2030.8 1079" fill="none" stroke="#666" stroke-width="1.9"/><path d="M2021.6000000000001 1065.4 L2030.8 1065.8 L2030.6000000000001 1059.6" fill="none" stroke="#666" stroke-width="1.9"/><path d="M2010.8 1082 L2017.4 1066 L2024.0 1082 M2013.4 1076.4 L2021.4 1076.4" fill="none" stroke="#666" stroke-width="1.9"/><text x="2294.6" y="944.6" font-family="Liberation Sans, sans-serif" font-size="22.5" fill="#111" style="font-weight:700;paint-order:stroke;stroke:#fff;stroke-width:2.6px;stroke-linejoin:round;">Mongolia</text><text x="2461.7" y="1038.8" font-family="Liberation Sans, sans-serif" font-size="20.5" fill="#555" style="paint-order:stroke;stroke:#fff;stroke-width:2.6px;stroke-linejoin:round;letter-spacing:1.4px;">Beijing</text><text x="2566" y="1045" font-family="Liberation Sans, sans-serif" font-size="17.6" fill="#111" style="font-weight:700;paint-order:stroke;stroke:#fff;stroke-width:2.6px;stroke-linejoin:round;">North Korea</text><text x="2580.5" y="1104" font-family="Liberation Sans, sans-serif" font-size="17.6" fill="#111" style="font-weight:700;paint-order:stroke;stroke:#fff;stroke-width:2.6px;stroke-linejoin:round;">South Korea</text></svg>
<div class="b" style="left:2617.0px;top:932.0px;width:31.0px;height:11.8px;background:#fff;"></div>
<div class="b" style="left:2666.8px;top:339.0px;width:8.6px;height:760.0px;background:#d9dce6;border-radius:5px;"></div>
<div class="b" style="left:2684.0px;top:260.0px;width:7.4px;height:713.0px;background:#e5e6e9;border-radius:4px;"></div>
<div class="b" style="left:437.0px;top:435.6px;width:277.5px;height:597.6px;background:#fff;border-radius:7px;box-shadow:0 2px 16px rgba(30,40,80,0.11),0 0 2px rgba(30,40,80,0.06);"></div>
<svg class="b" style="left:453.2px;top:456.2px;" width="25" height="25" viewBox="0 0 26 26"><path d="M3 20.6 L3 15.6 L14.6 4 Q15.8 2.8 17 4 L19.2 6.2 Q20.4 7.4 19.2 8.6 L7.6 20.4 Z M12.4 6.4 L16.8 10.8" fill="none" stroke="#2a3654" stroke-width="1.7" stroke-linejoin="round" stroke-linecap="round"/><path d="M14.4 23.4 L22.4 23.4" fill="none" stroke="#2a3654" stroke-width="1.7" stroke-linejoin="round" stroke-linecap="round"/></svg>
<div class="t" style="left:496.2px;top:457.55px;font-size:19.5px;line-height:19.5px;color:#2a3654;">Edit</div>
<div class="b" style="left:456.7px;top:501.1px;width:238.0px;height:1.8px;background:#e9ebf2;"></div>
<svg class="b" style="left:453.2px;top:522.8px;" width="25" height="25" viewBox="0 0 26 26"><path d="M11 9 L1.6 9 L1.6 20 L11 20 M19 9 L23.4 9 L23.4 20 L19 20" fill="none" stroke="#2a3654" stroke-width="1.7" stroke-linejoin="round" stroke-linecap="round"/><path d="M15 3.6 L15 25 M11.6 3.2 L18.4 3.2 M11.6 25.2 L18.4 25.2" fill="none" stroke="#2a3654" stroke-width="1.7" stroke-linejoin="round" stroke-linecap="round"/></svg>
<div class="t" style="left:496.2px;top:524.55px;font-size:19.5px;line-height:19.5px;color:#2a3654;">Rename</div>
<svg class="b" style="left:453.2px;top:572.0px;" width="25" height="25" viewBox="0 0 26 26"><path d="M2 6.6 L2 4.6 Q2 2.6 4 2.6 L21 2.6 Q23 2.6 23 4.6 L23 21.4 Q23 23.4 21 23.4 L4 23.4 Q2 23.4 2 21.4 L2 19.4" fill="none" stroke="#2a3654" stroke-width="1.7" stroke-linejoin="round" stroke-linecap="round"/><path d="M2.2 11 L2.2 15" fill="none" stroke="#2a3654" stroke-width="1.7" stroke-linejoin="round" stroke-linecap="round" stroke-dasharray="1.6 2.4"/><path d="M6.6 13 L17.6 13 M13.4 8.8 L17.8 13 L13.4 17.2" fill="none" stroke="#2a3654" stroke-width="1.7" stroke-linejoin="round" stroke-linecap="round"/></svg>
<div class="t" style="left:496.2px;top:573.55px;font-size:19.5px;line-height:19.5px;color:#2a3654;">Move to</div>
<svg class="b" style="left:453.2px;top:622.0px;" width="25" height="25" viewBox="0 0 26 26"><path d="M6 6 L6 3.8 Q6 2.6 7.2 2.6 L18.2 2.6 L23 7.4 L23 18.6 Q23 19.8 21.8 19.8 L6 19.8 Z" fill="none" stroke="#2a3654" stroke-width="1.7" stroke-linejoin="round" stroke-linecap="round"/><path d="M10.6 19.6 L10.6 12.8 L18.4 12.8 L18.4 19.6" fill="none" stroke="#2a3654" stroke-width="1.7" stroke-linejoin="round" stroke-linecap="round"/><path d="M2.2 8 L2.2 23.4 L19.4 23.4" fill="none" stroke="#2a3654" stroke-width="1.7" stroke-linejoin="round" stroke-linecap="round"/></svg>
<div class="t" style="left:496.2px;top:623.55px;font-size:19.5px;line-height:19.5px;color:#2a3654;">Save As</div>
<div class="b" style="left:456.7px;top:666.8px;width:238.0px;height:1.8px;background:#e9ebf2;"></div>
<div class="b" style="left:432.1px;top:673.1px;width:282.0px;height:51.8px;background:#e6efff;border:3.2px solid #f04146;box-sizing:border-box;"></div>
<svg class="b" style="left:453.2px;top:688.5px;" width="25" height="25" viewBox="0 0 26 26"><circle cx="12.6" cy="13.6" r="10.8" fill="none" stroke="#2a3654" stroke-width="1.7" stroke-linejoin="round" stroke-linecap="round"/><path d="M7.4 13.4 L12.6 8.4 L17.8 13.4 M7.4 19 L12.6 14 L17.8 19" fill="none" stroke="#2a3654" stroke-width="1.7" stroke-linejoin="round" stroke-linecap="round"/></svg>
<div class="t" style="left:496.2px;top:690.55px;font-size:19.5px;line-height:19.5px;color:#2a3654;">Update Information</div>
<div class="b" style="left:456.7px;top:733.6px;width:238.0px;height:1.8px;background:#e9ebf2;"></div>
<svg class="b" style="left:453.2px;top:756.1px;" width="25" height="25" viewBox="0 0 26 26"><circle cx="6.6" cy="14" r="3.6" fill="none" stroke="#2a3654" stroke-width="1.7" stroke-linejoin="round" stroke-linecap="round"/><circle cx="19" cy="7" r="3.3" fill="none" stroke="#2a3654" stroke-width="1.7" stroke-linejoin="round" stroke-linecap="round"/><circle cx="19" cy="20.6" r="3.3" fill="none" stroke="#2a3654" stroke-width="1.7" stroke-linejoin="round" stroke-linecap="round"/><path d="M9.8 12.2 L16 8.6 M9.8 15.8 L16 19" fill="none" stroke="#2a3654" stroke-width="1.7" stroke-linejoin="round" stroke-linecap="round"/></svg>
<div class="t" style="left:496.2px;top:757.55px;font-size:19.5px;line-height:19.5px;color:#2a3654;">Collaborate</div>
<div class="b" style="left:456.7px;top:800.5px;width:238.0px;height:1.8px;background:#e9ebf2;"></div>
<svg class="b" style="left:453.2px;top:822.7px;" width="25" height="25" viewBox="0 0 26 26"><path d="M1.8 12.4 L23.4 3 L17.8 24 L11.6 16.2 Z M11.6 16.2 L23.2 3.2 M11.6 16.2 L11.4 22.4 L14.2 19.4" fill="none" stroke="#2a3654" stroke-width="1.7" stroke-linejoin="round" stroke-linecap="round"/></svg>
<div class="t" style="left:496.2px;top:824.55px;font-size:19.5px;line-height:19.5px;color:#2a3654;">Publication Setting</div>
<svg class="b" style="left:453.2px;top:871.9px;" width="25" height="25" viewBox="0 0 26 26"><path d="M11 9.4 L14.4 6 Q17.6 3 20.6 6 Q23.6 9 20.6 12.2 L17.4 15.4 Q15.4 17 13.4 16.4" fill="none" stroke="#2a3654" stroke-width="1.7" stroke-linejoin="round" stroke-linecap="round"/><path d="M15 17.8 L11.6 21.2 Q8.4 24.2 5.4 21.2 Q2.4 18.2 5.4 15 L8.6 11.8 Q10.6 10.2 12.6 10.8" fill="none" stroke="#2a3654" stroke-width="1.7" stroke-linejoin="round" stroke-linecap="round"/></svg>
<div class="t" style="left:496.2px;top:873.55px;font-size:19.5px;line-height:19.5px;color:#2a3654;">Public Link</div>
<div class="b" style="left:456.7px;top:917.2px;width:238.0px;height:1.8px;background:#e9ebf2;"></div>
<svg class="b" style="left:453.2px;top:939.0px;" width="25" height="25" viewBox="0 0 26 26"><path d="M2 7.4 L24 7.4 M8.4 7 L8.4 3.8 L17.6 3.8 L17.6 7 M4.6 7.6 L4.6 24.4 L21.4 24.4 L21.4 7.6 M9 11.6 L9 20.4 M13 11.6 L13 20.4 M17 11.6 L17 20.4" fill="none" stroke="#2a3654" stroke-width="1.7" stroke-linejoin="round" stroke-linecap="round"/></svg>
<div class="t" style="left:496.2px;top:940.55px;font-size:19.5px;line-height:19.5px;color:#2a3654;">Delete</div>
<div class="t" style="left:453.2px;top:989.55px;font-size:19.5px;line-height:19.5px;color:#cbd0da;letter-spacing:0.2px;">Data Used Space:&nbsp; 0.00 KB</div>
<div class="b" style="left:759.0px;top:139.5px;width:1503.0px;height:6.0px;background:#f7f8fb;"></div>
<div class="b" style="left:755.6px;top:144.6px;width:1510.0px;height:830.0px;background:#fff;border:3.8px solid #f04146;box-sizing:border-box;"></div>
<div class="b" style="left:759.4px;top:148.4px;width:1502.4px;height:57.2px;background:#f7f8fc;"></div>
<div class="t" style="left:793.6px;top:160.68px;font-size:23.25px;line-height:23.25px;color:#1a2744;font-weight:700;">Update Progress</div>
<svg class="b" style="left:2210.5px;top:163.5px;" width="19" height="19" viewBox="0 0 19 19"><path d="M1 1 L18 18 M18 1 L1 18" stroke="#232f4a" stroke-width="1.8" fill="none"/></svg>
<div class="b" style="left:792.7px;top:222.6px;width:127.2px;height:40.2px;background:#2b5cd9;border-radius:3px;"></div>
<div class="t" style="left:792.7px;top:222.6px;width:127.2px;height:40.2px;line-height:40.6px;text-align:center;font-size:19.75px;color:#fff;">Update All</div>
<div class="b" style="left:792.7px;top:276.0px;width:1440.0px;height:50.2px;background:#eef0f6;"></div>
<div class="b" style="left:792.7px;top:326.0px;width:1440.0px;height:2.2px;background:#d5dae6;"></div>
<div class="t" style="left:813.6px;top:290.30px;font-size:20px;line-height:20px;color:#1d2a4c;">Name</div>
<div class="t" style="left:1736.4px;top:290.30px;font-size:20px;line-height:20px;color:#1d2a4c;">Update Status</div>
<div class="t" style="left:1991.0px;top:290.30px;font-size:20px;line-height:20px;color:#1d2a4c;letter-spacing:0.1px;">Last Update Completion ...</div>
<div class="b" style="left:792.7px;top:380.2px;width:1440.0px;height:1.6px;background:#e4e7ef;"></div>
<svg class="b" style="left:814.0px;top:343.2px;" width="22" height="23" viewBox="0 0 22 23"><path d="M1 1 L14.4 1 L20.4 7 L20.4 21.4 L1 21.4 Z" fill="#fff" stroke="#3566e0" stroke-width="1.6" stroke-linejoin="round"/><path d="M14.2 1.2 L14.2 7.2 L20.2 7.2" fill="none" stroke="#3566e0" stroke-width="1.4"/><path d="M5 15.6 L8.8 11.8 L11.8 14.4 L16.4 9.8" fill="none" stroke="#3566e0" stroke-width="1.7"/></svg>
<div class="t" style="left:845.5px;top:343.30px;font-size:20px;line-height:20px;color:#1d2a4c;">ENdemo_Funnel Diagram</div>
<div class="b" style="left:1736.2px;top:336.5px;width:182.6px;height:35.4px;background:#effaef;border:1.5px solid #d8f0d8;box-sizing:border-box;border-radius:4px;"></div>
<div class="t" style="left:1744.4px;top:344.30px;font-size:20px;line-height:20px;color:#1f9a2e;">Successful Update</div>
<div class="t" style="left:1991.0px;top:343.30px;font-size:20px;line-height:20px;color:#1d2a4c;">2022-12-09 17:13:28</div>
<div class="b" style="left:792.7px;top:381.8px;width:1440.0px;height:52.2px;background:#f7f8fc;"></div>
<div class="b" style="left:792.7px;top:433.8px;width:1440.0px;height:1.6px;background:#e4e7ef;"></div>
<svg class="b" style="left:814.0px;top:396.8px;" width="22" height="23" viewBox="0 0 22 23"><path d="M1 1 L14.4 1 L20.4 7 L20.4 21.4 L1 21.4 Z" fill="#fff" stroke="#3566e0" stroke-width="1.6" stroke-linejoin="round"/><path d="M14.2 1.2 L14.2 7.2 L20.2 7.2" fill="none" stroke="#3566e0" stroke-width="1.4"/><path d="M5 15.6 L8.8 11.8 L11.8 14.4 L16.4 9.8" fill="none" stroke="#3566e0" stroke-width="1.7"/></svg>
<div class="t" style="left:845.5px;top:397.30px;font-size:20px;line-height:20px;color:#1d2a4c;">ENdemo_Height_and_Weight_Distribution</div>
<div class="b" style="left:1736.2px;top:390.1px;width:182.6px;height:35.4px;background:#effaef;border:1.5px solid #d8f0d8;box-sizing:border-box;border-radius:4px;"></div>
<div class="t" style="left:1744.4px;top:397.30px;font-size:20px;line-height:20px;color:#1f9a2e;">Successful Update</div>
<div class="t" style="left:1991.0px;top:397.30px;font-size:20px;line-height:20px;color:#1d2a4c;">2022-12-09 17:17:42</div>
<div class="b" style="left:792.7px;top:487.4px;width:1440.0px;height:1.6px;background:#e4e7ef;"></div>
<svg class="b" style="left:814.0px;top:450.4px;" width="22" height="23" viewBox="0 0 22 23"><path d="M1 1 L14.4 1 L20.4 7 L20.4 21.4 L1 21.4 Z" fill="#fff" stroke="#3566e0" stroke-width="1.6" stroke-linejoin="round"/><path d="M14.2 1.2 L14.2 7.2 L20.2 7.2" fill="none" stroke="#3566e0" stroke-width="1.4"/><path d="M5 15.6 L8.8 11.8 L11.8 14.4 L16.4 9.8" fill="none" stroke="#3566e0" stroke-width="1.7"/></svg>
<div class="t" style="left:845.5px;top:450.30px;font-size:20px;line-height:20px;color:#1d2a4c;">ENdemo_Office_Supplies_Data</div>
<div class="b" style="left:1736.2px;top:443.7px;width:182.6px;height:35.4px;background:#effaef;border:1.5px solid #d8f0d8;box-sizing:border-box;border-radius:4px;"></div>
<div class="t" style="left:1744.4px;top:451.30px;font-size:20px;line-height:20px;color:#1f9a2e;">Successful Update</div>
<div class="t" style="left:1991.0px;top:450.30px;font-size:20px;line-height:20px;color:#1d2a4c;">2022-12-09 17:12:00</div>
<div class="b" style="left:792.7px;top:489.0px;width:1440.0px;height:52.2px;background:#f7f8fc;"></div>
<div class="b" style="left:792.7px;top:541.0px;width:1440.0px;height:1.6px;background:#e4e7ef;"></div>
<svg class="b" style="left:814.0px;top:504.0px;" width="22" height="23" viewBox="0 0 22 23"><path d="M1 1 L14.4 1 L20.4 7 L20.4 21.4 L1 21.4 Z" fill="#fff" stroke="#3566e0" stroke-width="1.6" stroke-linejoin="round"/><path d="M14.2 1.2 L14.2 7.2 L20.2 7.2" fill="none" stroke="#3566e0" stroke-width="1.4"/><path d="M5 15.6 L8.8 11.8 L11.8 14.4 L16.4 9.8" fill="none" stroke="#3566e0" stroke-width="1.7"/></svg>
<div class="t" style="left:845.5px;top:504.30px;font-size:20px;line-height:20px;color:#1d2a4c;">ENdemo_Pareto_Data_Analysis</div>
<div class="b" style="left:1736.2px;top:497.3px;width:182.6px;height:35.4px;background:#effaef;border:1.5px solid #d8f0d8;box-sizing:border-box;border-radius:4px;"></div>
<div class="t" style="left:1744.4px;top:504.30px;font-size:20px;line-height:20px;color:#1f9a2e;">Successful Update</div>
<div class="t" style="left:1991.0px;top:504.30px;font-size:20px;line-height:20px;color:#1d2a4c;">2022-12-09 17:20:54</div>
<div class="b" style="left:792.7px;top:594.6px;width:1440.0px;height:1.6px;background:#e4e7ef;"></div>
<svg class="b" style="left:814.0px;top:557.6px;" width="22" height="23" viewBox="0 0 22 23"><path d="M1 1 L14.4 1 L20.4 7 L20.4 21.4 L1 21.4 Z" fill="#fff" stroke="#3566e0" stroke-width="1.6" stroke-linejoin="round"/><path d="M14.2 1.2 L14.2 7.2 L20.2 7.2" fill="none" stroke="#3566e0" stroke-width="1.4"/><path d="M5 15.6 L8.8 11.8 L11.8 14.4 L16.4 9.8" fill="none" stroke="#3566e0" stroke-width="1.7"/></svg>
<div class="t" style="left:845.5px;top:557.30px;font-size:20px;line-height:20px;color:#1d2a4c;">ENdemo_Radar_Chart</div>
<div class="b" style="left:1736.2px;top:550.9px;width:182.6px;height:35.4px;background:#effaef;border:1.5px solid #d8f0d8;box-sizing:border-box;border-radius:4px;"></div>
<div class="t" style="left:1744.4px;top:558.30px;font-size:20px;line-height:20px;color:#1f9a2e;">Successful Update</div>
<div class="t" style="left:1991.0px;top:558.30px;font-size:20px;line-height:20px;color:#1d2a4c;">2022-12-09 17:10:33</div>
<div class="b" style="left:792.7px;top:596.2px;width:1440.0px;height:52.2px;background:#f7f8fc;"></div>
<div class="b" style="left:792.7px;top:648.2px;width:1440.0px;height:1.6px;background:#e4e7ef;"></div>
<svg class="b" style="left:814.0px;top:611.2px;" width="22" height="23" viewBox="0 0 22 23"><path d="M1 1 L14.4 1 L20.4 7 L20.4 21.4 L1 21.4 Z" fill="#fff" stroke="#3566e0" stroke-width="1.6" stroke-linejoin="round"/><path d="M14.2 1.2 L14.2 7.2 L20.2 7.2" fill="none" stroke="#3566e0" stroke-width="1.4"/><path d="M5 15.6 L8.8 11.8 L11.8 14.4 L16.4 9.8" fill="none" stroke="#3566e0" stroke-width="1.7"/></svg>
<div class="t" style="left:845.5px;top:611.30px;font-size:20px;line-height:20px;color:#1d2a4c;">ENdemo_Repurchase_Analysis_Table</div>
<div class="b" style="left:1736.2px;top:604.5px;width:182.6px;height:35.4px;background:#effaef;border:1.5px solid #d8f0d8;box-sizing:border-box;border-radius:4px;"></div>
<div class="t" style="left:1744.4px;top:612.30px;font-size:20px;line-height:20px;color:#1f9a2e;">Successful Update</div>
<div class="t" style="left:1991.0px;top:611.30px;font-size:20px;line-height:20px;color:#1d2a4c;">2022-12-09 17:18:04</div>
<div class="b" style="left:792.7px;top:701.8px;width:1440.0px;height:1.6px;background:#e4e7ef;"></div>
<svg class="b" style="left:814.0px;top:664.8px;" width="22" height="23" viewBox="0 0 22 23"><path d="M1 1 L14.4 1 L20.4 7 L20.4 21.4 L1 21.4 Z" fill="#fff" stroke="#3566e0" stroke-width="1.6" stroke-linejoin="round"/><path d="M14.2 1.2 L14.2 7.2 L20.2 7.2" fill="none" stroke="#3566e0" stroke-width="1.4"/><path d="M5 15.6 L8.8 11.8 L11.8 14.4 L16.4 9.8" fill="none" stroke="#3566e0" stroke-width="1.7"/></svg>
<div class="t" style="left:845.5px;top:665.30px;font-size:20px;line-height:20px;color:#1d2a4c;">ENdemo_Spring_Festival_Migration_Data</div>
<div class="b" style="left:1736.2px;top:658.1px;width:182.6px;height:35.4px;background:#effaef;border:1.5px solid #d8f0d8;box-sizing:border-box;border-radius:4px;"></div>
<div class="t" style="left:1744.4px;top:665.30px;font-size:20px;line-height:20px;color:#1f9a2e;">Successful Update</div>
<div class="t" style="left:1991.0px;top:665.30px;font-size:20px;line-height:20px;color:#1d2a4c;">2022-12-09 17:18:51</div>
<div class="b" style="left:792.7px;top:703.4px;width:1440.0px;height:52.2px;background:#f7f8fc;"></div>
<div class="b" style="left:792.7px;top:755.4px;width:1440.0px;height:1.6px;background:#e4e7ef;"></div>
<svg class="b" style="left:814.0px;top:718.4px;" width="22" height="23" viewBox="0 0 22 23"><path d="M1 1 L14.4 1 L20.4 7 L20.4 21.4 L1 21.4 Z" fill="#fff" stroke="#3566e0" stroke-width="1.6" stroke-linejoin="round"/><path d="M14.2 1.2 L14.2 7.2 L20.2 7.2" fill="none" stroke="#3566e0" stroke-width="1.4"/><path d="M5 15.6 L8.8 11.8 L11.8 14.4 L16.4 9.8" fill="none" stroke="#3566e0" stroke-width="1.7"/></svg>
<div class="t" style="left:845.5px;top:718.30px;font-size:20px;line-height:20px;color:#1d2a4c;">ENdemo_Waterfall_Chart</div>
<div class="b" style="left:1736.2px;top:711.7px;width:182.6px;height:35.4px;background:#effaef;border:1.5px solid #d8f0d8;box-sizing:border-box;border-radius:4px;"></div>
<div class="t" style="left:1744.4px;top:719.30px;font-size:20px;line-height:20px;color:#1f9a2e;">Successful Update</div>
<div class="t" style="left:1991.0px;top:718.30px;font-size:20px;line-height:20px;color:#1d2a4c;">2022-12-09 17:22:01</div>
<div class="b" style="left:2167.8px;top:916.0px;width:65.2px;height:46.4px;background:#2b5cd9;border-radius:3px;"></div>
<div class="t" style="left:2167.8px;top:916px;width:65.2px;height:46.4px;line-height:46.8px;text-align:center;font-size:19.5px;color:#fff;">OK</div>
<div class="b" style="left:1017.0px;top:96.0px;width:40.0px;height:40.0px;background:#f5393f;border-radius:50%;"></div>
<div class="t" style="left:1017px;top:96px;width:40px;height:40px;line-height:41.5px;text-align:center;font-size:29px;color:#fff;">3</div>
<div class="b" style="left:416.0px;top:354.0px;width:40.0px;height:40.0px;background:#f5393f;border-radius:50%;"></div>
<svg class="b" style="left:416.0px;top:354.0px;" width="40" height="40" viewBox="0 0 40 40"><polygon points="23.5,10.1 23.5,31.3 19.8,31.3 19.8,15.1 15.1,18.4 15.1,15.2 20.9,10.1" fill="#fff"/></svg>
<div class="b" style="left:384.0px;top:678.0px;width:40.0px;height:40.0px;background:#f5393f;border-radius:50%;"></div>
<div class="t" style="left:384px;top:678px;width:40px;height:40px;line-height:41.5px;text-align:center;font-size:29px;color:#fff;">2</div>
</body></html>
